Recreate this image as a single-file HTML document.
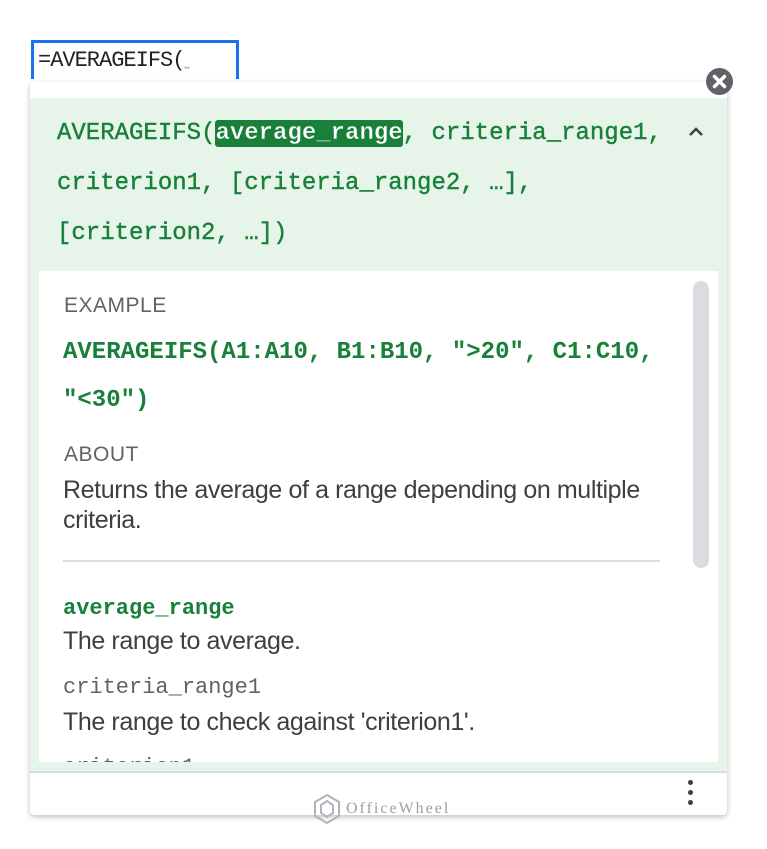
<!DOCTYPE html>
<html><head><style>
body{margin:0;width:767px;height:849px;background:#fff;position:relative;overflow:hidden;font-family:"Liberation Sans",sans-serif}
.abs{position:absolute}
.mono{font-family:"Liberation Mono",monospace;font-size:24px;white-space:nowrap;letter-spacing:0}
.g{color:#188038}
.sm{color:#5f6368;font-size:21px;letter-spacing:0.5px}
.body{color:#3c4043;font-size:25px;letter-spacing:-0.4px;white-space:nowrap}
</style></head><body>
<div class="abs" style="left:30px;top:82px;width:697px;height:733px;background:#fff;box-shadow:0 2px 6px rgba(0,0,0,.25);border-radius:4px"></div>
<div class="abs" style="left:31px;top:40px;width:202px;height:36px;border:3px solid #1a73e8;border-bottom:none;background:#fff"></div>
<div class="abs mono" style="left:38px;top:48px;font-size:22px;color:#222;letter-spacing:-1px">=AVERAGEIFS(<span style="font-size:12px;color:#999">⎵</span></div>
<div class="abs" style="left:30px;top:98px;width:697px;height:673px;background:#e6f4ea"></div>
<div class="abs mono g" style="left:57px;top:109px;line-height:50px;-webkit-text-stroke:0.4px #188038">AVERAGEIFS(<span style="background:#188038;color:#fff;border-radius:3px;font-weight:bold">average_range</span>, criteria_range1,<br>criterion1, [criteria_range2, …],<br>[criterion2, …])</div>
<svg class="abs" style="left:687px;top:125px" width="18" height="14" viewBox="0 0 18 14"><path d="M3 10 L9 4 L15 10" fill="none" stroke="#3c4043" stroke-width="2.5"/></svg>
<div class="abs" style="left:39px;top:271px;width:679px;height:491px;background:#fff;overflow:hidden">
 <div class="abs" style="left:654px;top:10px;width:16px;height:287px;background:#dadce0;border-radius:8px"></div>
 <div class="abs sm" style="left:25px;top:23px">EXAMPLE</div>
 <div class="abs mono g" style="left:24px;top:58px;line-height:48px;font-weight:bold">AVERAGEIFS(A1:A10, B1:B10, "&gt;20", C1:C10,<br>"&lt;30")</div>
 <div class="abs sm" style="left:25px;top:172px">ABOUT</div>
 <div class="abs body" style="left:24px;top:204px;line-height:30px">Returns the average of a range depending on multiple<br>criteria.</div>
 <div class="abs" style="left:24px;top:289px;width:597px;height:2px;background:#dadce0"></div>
 <div class="abs mono g" style="left:24px;top:325px;font-size:22px;font-weight:bold">average_range</div>
 <div class="abs body" style="left:24px;top:356px">The range to average.</div>
 <div class="abs mono" style="left:24px;top:404px;font-size:22px;color:#5f6368">criteria_range1</div>
 <div class="abs body" style="left:24px;top:437px">The range to check against 'criterion1'.</div>
 <div class="abs mono" style="left:24px;top:484px;font-size:22px;color:#5f6368">criterion1</div>
</div>
<div class="abs" style="left:30px;top:771px;width:697px;height:2px;background:#dadce0"></div>
<div class="abs" style="left:688px;top:780px;width:5px;height:28px">
 <div style="width:5px;height:5px;background:#3c4043;border-radius:50%;margin-bottom:5px"></div>
 <div style="width:5px;height:5px;background:#3c4043;border-radius:50%;margin-bottom:5px"></div>
 <div style="width:5px;height:5px;background:#3c4043;border-radius:50%"></div>
</div>
<svg class="abs" style="left:312px;top:793px" width="30" height="32" viewBox="0 0 30 32"><path d="M15 2 L27 9 L27 23 L15 30 L3 23 L3 9 Z M15 8 L21 12 L21 20 L15 24 L9 20 L9 12 Z" fill="none" stroke="#b0b4ba" stroke-width="2"/></svg>
<div class="abs" style="left:346px;top:800px;font-family:'Liberation Serif',serif;font-size:16px;color:#9aa0a6;letter-spacing:2px">OfficeWheel</div>
<svg class="abs" style="left:705px;top:67px" width="29" height="29" viewBox="0 0 29 29"><circle cx="14.5" cy="14.5" r="13.5" fill="#5f6368"/><path d="M9.5 9.5 L19.5 19.5 M19.5 9.5 L9.5 19.5" stroke="#fff" stroke-width="3.5" stroke-linecap="round"/></svg>
</body></html>
